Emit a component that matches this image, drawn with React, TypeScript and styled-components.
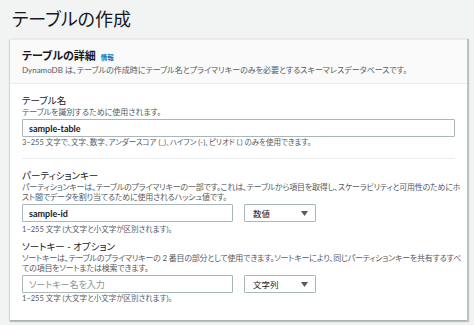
import styled, { createGlobalStyle } from "styled-components";

const GlobalStyle = createGlobalStyle`
  html, body {
    margin: 0;
    padding: 0;
    background: #f2f3f3;
  }
  body {
    font-family: Lato, "Noto Sans CJK JP", sans-serif;
    font-feature-settings: "palt";
    color: #16191f;
  }
`;

const Page = styled.div`
  padding: 8px 7px 8px 10px;
  height: 325px;
  box-sizing: border-box;
  overflow: hidden;
`;

const PageTitle = styled.h1`
  margin: 0 0 9px 2px;
  font-size: 18px;
  line-height: 22px;
  font-weight: 400;
  color: #16191f;
`;

const Card = styled.section`
  background: #fff;
  border-top: 1px solid #eaeded;
  box-shadow: 1px 1px 1px 1px rgba(0, 28, 36, 0.22), -1px 1px 1px 0 rgba(0, 28, 36, 0.1);
`;

const CardHeader = styled.header`
  background: #fafafa;
  border-bottom: 1px solid #eaeded;
  padding: 9px 12px 8px;
`;

const CardTitle = styled.h2`
  margin: 0;
  display: flex;
  align-items: baseline;
  gap: 5px;
  font-size: 11px;
  line-height: 14px;
  font-weight: 700;
`;

const InfoLink = styled.a`
  font-size: 6.5px;
  font-weight: 700;
  color: #0073bb;
  text-decoration: none;
`;

const Description = styled.p<{ $nowrap?: boolean }>`
  margin: 0;
  font-size: 8px;
  line-height: 10px;
  color: #545b64;
  white-space: ${(p) => (p.$nowrap ? "nowrap" : "normal")};
  letter-spacing: ${(p) => (p.$nowrap ? "-0.22px" : "0")};
`;

const CardBody = styled.div`
  padding: 11px 12px 16px;
`;

const Field = styled.div`
  display: flex;
  flex-direction: column;
`;

const Label = styled.label`
  font-size: 9.5px;
  line-height: 12px;
  color: #16191f;
`;

const ControlRow = styled.div`
  display: flex;
  gap: 11px;
  margin-top: 2px;
`;

const TextInput = styled.div<{ $width?: number; $placeholder?: boolean }>`
  box-sizing: border-box;
  height: 18px;
  flex: ${(p) => (p.$width ? "none" : "1")};
  width: ${(p) => (p.$width ? `${p.$width}px` : "auto")};
  border: 1px solid #aab7b8;
  border-radius: 1px;
  padding: 0 6px;
  display: flex;
  align-items: center;
  font-size: 9px;
  font-weight: ${(p) => (p.$placeholder ? 400 : 700)};
  color: ${(p) => (p.$placeholder ? "#879596" : "#16191f")};
`;

const Select = styled.div`
  box-sizing: border-box;
  width: 72px;
  height: 18px;
  border: 1px solid #aab7b8;
  border-radius: 1px;
  padding: 0 7px 0 8px;
  display: flex;
  align-items: center;
  justify-content: space-between;
  font-size: 8.5px;
  color: #16191f;
`;

const Constraint = styled.p<{ $gap?: number }>`
  margin: ${(p) => p.$gap ?? 1}px 0 0;
  font-size: 7.5px;
  line-height: 10px;
  color: #545b64;
`;

const Divider = styled.hr`
  border: none;
  border-top: 1px solid #eaeded;
  margin: 10px 0 11px;
`;

const Gap = styled.div`
  height: 6px;
`;

function Caret() {
  return (
    <svg width="7" height="5" viewBox="0 0 7 5">
      <path d="M0 0 H7 L3.5 5 Z" fill="#545b64" />
    </svg>
  );
}

export default function App() {
  return (
    <Page>
      <GlobalStyle />
      <PageTitle>テーブルの作成</PageTitle>
      <Card>
        <CardHeader>
          <CardTitle>
            テーブルの詳細 <InfoLink href="#">情報</InfoLink>
          </CardTitle>
          <Description>
            DynamoDB は、テーブルの作成時にテーブル名とプライマリキーのみを必要とするスキーマレスデータベースです。
          </Description>
        </CardHeader>
        <CardBody>
          <Field>
            <Label>テーブル名</Label>
            <Description>テーブルを識別するために使用されます。</Description>
            <ControlRow>
              <TextInput>sample-table</TextInput>
            </ControlRow>
            <Constraint>
              3~255 文字で、文字、数字、アンダースコア (_)、ハイフン (-)、ピリオド (.) のみを使用できます。
            </Constraint>
          </Field>
          <Divider />
          <Field>
            <Label>パーティションキー</Label>
            <Description $nowrap>
              パーティションキーは、テーブルのプライマリキーの一部です。これは、テーブルから項目を取得し、スケーラビリティと可用性のためにホ
              <br />
              スト間でデータを割り当てるために使用されるハッシュ値です。
            </Description>
            <ControlRow>
              <TextInput $width={211}>sample-id</TextInput>
              <Select>
                数値
                <Caret />
              </Select>
            </ControlRow>
            <Constraint $gap={3}>1~255 文字 (大文字と小文字が区別されます)。</Constraint>
          </Field>
          <Gap />
          <Field>
            <Label>ソートキー - オプション</Label>
            <Description $nowrap>
              ソートキーは、テーブルのプライマリキーの 2 番目の部分として使用できます。ソートキーにより、同じパーティションキーを共有するすべ
              <br />
              ての項目をソートまたは検索できます。
            </Description>
            <ControlRow>
              <TextInput $width={211} $placeholder>
                ソートキー名を入力
              </TextInput>
              <Select>
                文字列
                <Caret />
              </Select>
            </ControlRow>
            <Constraint>1~255 文字 (大文字と小文字が区別されます)。</Constraint>
          </Field>
        </CardBody>
      </Card>
    </Page>
  );
}
